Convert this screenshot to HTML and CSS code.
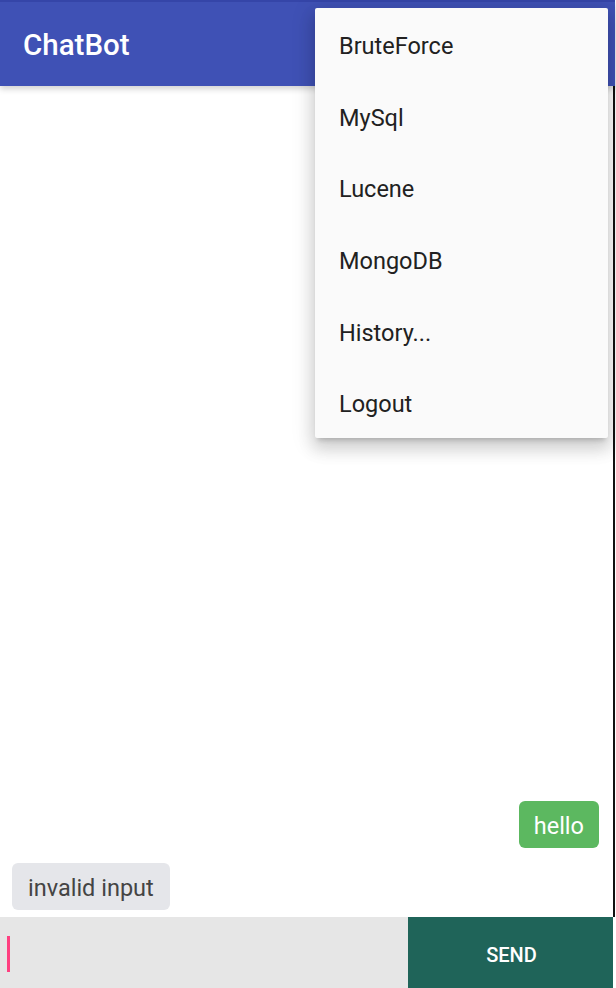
FILE: index.html
```html
<!DOCTYPE html>
<html lang="en">

<head>
  <meta charset="UTF-8">
  <title>ChatBot</title>
  <link rel="stylesheet" href="styles.css">
</head>

<body>
  <div class="screen">
    <header class="toolbar">
      <h1>ChatBot</h1>
    </header>

    <main class="chat">
      <div class="msg msg-out">hello</div>
      <div class="msg msg-in">invalid input</div>
    </main>

    <div class="input-bar">
      <div class="input-field"><span class="cursor"></span></div>
      <button type="button" class="send">SEND</button>
    </div>

    <ul class="menu">
      <li>BruteForce</li>
      <li>MySql</li>
      <li>Lucene</li>
      <li>MongoDB</li>
      <li>History...</li>
      <li>Logout</li>
    </ul>
  </div>
</body>

</html>
```

FILE: styles.css
```css
body {
  font-family: 'Roboto', 'Liberation Sans', sans-serif;
  background-color: #fff;
  margin: 0;
  padding: 0;
}

*,
*:before,
*:after {
  box-sizing: border-box;
}

.screen {
  position: relative;
  width: 615px;
  height: 988px;
  display: flex;
  flex-direction: column;
}

.toolbar {
  height: 86px;
  background: #3f51b5;
  border-top: 2px solid #3545a8;
  box-shadow: 0 3px 6px rgba(0, 0, 0, 0.18);
  display: flex;
  align-items: center;
  padding-left: 23px;
  position: relative;
  z-index: 1;
}

.toolbar h1 {
  margin: 0;
  margin-top: 2px;
  color: #fff;
  font-size: 29.5px;
  font-weight: 500;
}

.chat {
  flex: 1;
  display: flex;
  flex-direction: column;
  justify-content: flex-end;
  padding: 0 14px 7px 12px;
  border-right: 2px solid #111;
}

.msg {
  font-size: 23.5px;
  height: 47px;
  line-height: 51px;
  padding: 0 16px;
  border-radius: 6px;
}

.msg-out {
  align-self: flex-end;
  background: #5cb860;
  color: #fff;
  margin-bottom: 15px;
  padding: 0 15px;
}

.msg-in {
  align-self: flex-start;
  background: #e5e6ea;
  color: #444;
}

.input-bar {
  height: 71px;
  display: flex;
  margin-right: 2px;
}

.input-field {
  width: 408px;
  background: #e6e6e6;
  padding: 19px 0 0 7px;
}

.cursor {
  display: block;
  width: 3px;
  height: 36px;
  background: #ff4081;
}

.send {
  flex: 1;
  border: none;
  background: #1f6459;
  color: #fff;
  font-family: 'Roboto', sans-serif;
  font-size: 20px;
  font-weight: 500;
  padding: 5px 0 0 2px;
  cursor: pointer;
}

.menu {
  position: absolute;
  top: 8px;
  left: 315px;
  width: 293px;
  margin: 0;
  padding: 0;
  list-style: none;
  background: #fafafa;
  border-radius: 2px;
  z-index: 2;
  box-shadow: 0 10px 16px 2px rgba(0, 0, 0, 0.12), 0 4px 22px 4px rgba(0, 0, 0, 0.10), 0 5px 5px -3px rgba(0, 0, 0, 0.18);
}

.menu li {
  height: 71.7px;
  line-height: 76px;
  padding-left: 24px;
  font-size: 23.5px;
  color: #212121;
}
```
